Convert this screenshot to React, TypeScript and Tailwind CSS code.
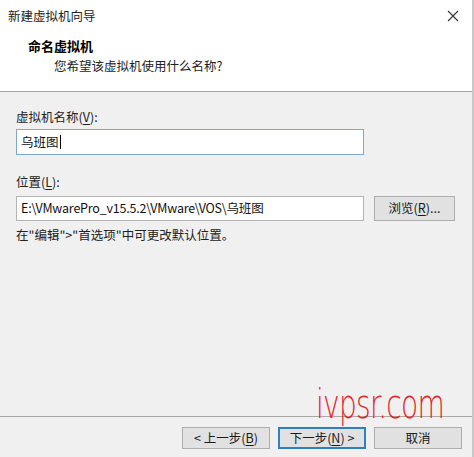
import React from "react";

const font = { fontFamily: '"Noto Sans CJK SC", "Noto Sans", sans-serif' };

function Btn({ children, primary, className = "" }: { children: React.ReactNode; primary?: boolean; className?: string }) {
  return (
    <div
      className={`flex h-[22px] items-center justify-center bg-[#e1e1e1] text-[12.5px] leading-none text-[#1a1a1a] ${
        primary ? "border-2 border-[#2f7fc6]" : "border border-[#adadad]"
      } ${className}`}
    >
      {children}
    </div>
  );
}

export default function App() {
  return (
    <div className="relative h-[457px] w-[474px] overflow-hidden bg-[#f0f0f0]" style={font}>
      <div className="flex h-full w-[472px] flex-col">
        {/* header */}
        <div className="h-[91px] bg-white">
          <div className="flex h-[32px] items-center justify-between pl-[8px] pr-[12px]">
            <span className="text-[12.5px] text-[#222]">新建虚拟机向导</span>
            <svg width="12" height="12" viewBox="0 0 12 12" className="mr-[1px]">
              <path d="M1 1L11 11M11 1L1 11" stroke="#333" strokeWidth="1.1" fill="none" />
            </svg>
          </div>
          <div className="pl-[28px] pt-[5px]">
            <div className="text-[13px] font-bold leading-[18px] text-black">命名虚拟机</div>
            <div className="pl-[26px] pt-[2px] text-[12.5px] leading-[18px] text-[#222]">您希望该虚拟机使用什么名称?</div>
          </div>
        </div>
        <div className="h-px bg-[#a8a8a8]" />

        {/* body */}
        <div className="flex flex-1 flex-col px-[16px] pt-[16px]">
          <div className="text-[12.5px] leading-[18px] text-[#222]">
            虚拟机名称(<span className="underline underline-offset-2">V</span>):
          </div>
          <div className="mt-[3px] flex h-[26px] w-[348px] items-center border border-[#7ea9cc] bg-white pl-[4px] text-[12.5px] text-[#111]">
            乌班图<span className="ml-[1px] inline-block h-[14px] w-px bg-black" />
          </div>

          <div className="mt-[18px] text-[12.5px] leading-[18px] text-[#222]">
            位置(<span className="underline underline-offset-2">L</span>):
          </div>
          <div className="mt-[5px] flex items-center gap-[10px]">
            <div className="flex h-[25px] w-[348px] items-center border border-[#b4b4b4] bg-white pl-[4px] text-[12.5px] tracking-[-0.2px] text-[#111]">
              E:\VMwarePro_v15.5.2\VMware\VOS\乌班图
            </div>
            <Btn className="h-[25px] w-[81px]">
              浏览(<span className="underline underline-offset-2">R</span>)...
            </Btn>
          </div>
          <div className="mt-[5px] text-[12.5px] leading-[18px] text-[#222]">在"编辑"&gt;"首选项"中可更改默认位置。</div>
        </div>

        <div className="h-px bg-[#a8a8a8]" />
        <div className="flex h-[40px] items-start justify-end gap-[8px] pr-[10px] pt-[10px]">
          <Btn className="w-[88px]">
            &lt; 上一步(<span className="underline underline-offset-2">B</span>)
          </Btn>
          <Btn primary className="w-[88px]">
            下一步(<span className="underline underline-offset-2">N</span>) &gt;
          </Btn>
          <Btn className="w-[88px]">取消</Btn>
        </div>
      </div>
      <div className="absolute right-0 top-0 h-full w-[2px] bg-[#c8c8c8]" />
      <div
        className="pointer-events-none absolute left-[316px] top-[384px] text-[40px] font-light leading-none tracking-[-1px] text-[#e3262b]"
        style={{ fontFamily: '"DejaVu Sans", sans-serif', transform: "scaleX(0.7)", transformOrigin: "left" }}
      >
        ivpsr.com
      </div>
    </div>
  );
}
